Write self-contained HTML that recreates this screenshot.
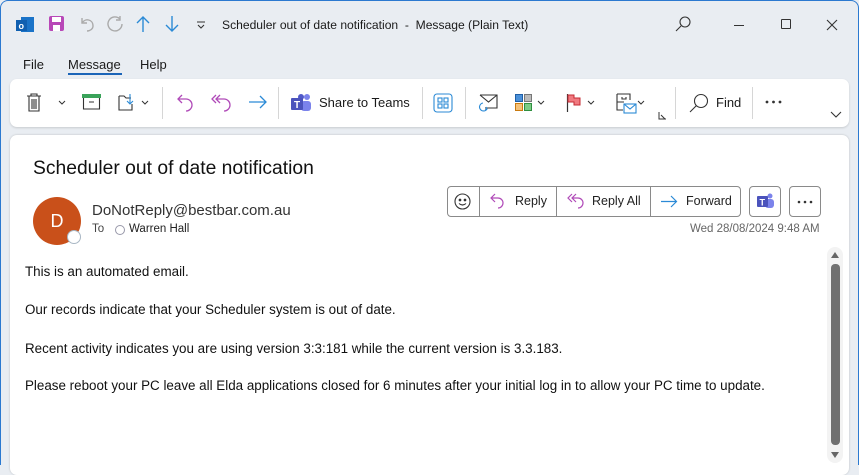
<!DOCTYPE html>
<html><head><meta charset="utf-8"><style>
*{box-sizing:border-box;margin:0;padding:0}
body{width:859px;height:465px;overflow:hidden;background:#e9edf2;font-family:"Liberation Sans",sans-serif;color:#1a1a1a;position:relative}
.frame{position:absolute;inset:0;border:1px solid #2b79d0;border-bottom:none;border-radius:8px 8px 0 0}
.a{position:absolute;white-space:nowrap}
svg{position:absolute}
.rib{position:absolute;left:10px;top:79px;width:839px;height:48px;background:#fff;border-radius:7px;box-shadow:0 1px 2px rgba(0,0,0,.15)}
.sep{position:absolute;top:8px;width:1px;height:32px;background:#d6d6d6}
.card{position:absolute;left:10px;top:135px;width:839px;height:340px;background:#fff;border-radius:7px;box-shadow:0 0 2px rgba(0,0,0,.2)}
.btn{position:absolute;top:186px;height:31px;border:1px solid #8a8a8a;border-radius:4px;background:#fff}
.bt{font-size:12.5px;color:#222}
.p{font-size:13.4px;color:#111}
</style></head><body>
<div class="frame"></div>
<svg style="left:15px;top:16px" width="20" height="18"><rect x="6" y="1" width="13" height="15" fill="#1a73c8"/><rect x="1" y="4" width="11" height="11" fill="#0f5fb0"/><text x="3.5" y="13" font-size="9" fill="#fff" font-family="Liberation Sans" font-weight="bold">o</text></svg>
<svg style="left:48px;top:15px" width="18" height="18"><rect x="1" y="1" width="15" height="15" rx="2" fill="#b848b8"/><rect x="4" y="2" width="9" height="5" fill="#fff"/><rect x="5" y="10" width="7" height="6" fill="#fff"/></svg>
<svg style="left:78px;top:15px" width="18" height="18" fill="none" stroke="#aaa" stroke-width="1.4"><path d="M4 3v5h5"/><path d="M4 8c3-5 11-4 11 3 0 3-3 5-6 5"/></svg>
<svg style="left:106px;top:15px" width="18" height="18" fill="none" stroke="#aaa" stroke-width="1.4"><path d="M14 4a7 7 0 1 0 2 5"/><path d="M14 1v4h-4"/></svg>
<svg style="left:135px;top:15px" width="16" height="18" fill="none" stroke="#2b8ad6" stroke-width="1.4"><path d="M8 17V2M2 8l6-6 6 6"/></svg>
<svg style="left:164px;top:15px" width="16" height="18" fill="none" stroke="#2b8ad6" stroke-width="1.4"><path d="M8 1v15M2 10l6 6 6-6"/></svg>
<svg style="left:196px;top:21px" width="10" height="8" fill="none" stroke="#333" stroke-width="1.1"><path d="M1 1h8M2 4l3 3 3-3"/></svg>
<div class="a" style="left:222px;top:18px;font-size:12.1px">Scheduler out of date notification&nbsp; - &nbsp;Message (Plain Text)</div>
<svg style="left:675px;top:16px" width="16" height="16" fill="none" stroke="#333" stroke-width="1.1"><circle cx="10" cy="6" r="5"/><path d="M6 10l-5 5"/></svg>
<div class="a" style="left:734px;top:25px;width:10px;height:1px;background:#333"></div>
<div class="a" style="left:781px;top:19px;width:10px;height:10px;border:1px solid #333;border-radius:1px"></div>
<svg style="left:826px;top:19px" width="12" height="12" stroke="#333" stroke-width="1.1"><path d="M1 1l10 10M11 1L1 11"/></svg>
<div class="a" style="left:23px;top:57px;font-size:13px">File</div>
<div class="a" style="left:68px;top:57px;font-size:13px">Message</div>
<div class="a" style="left:68px;top:73px;width:54px;height:2px;background:#1a64b8"></div>
<div class="a" style="left:140px;top:57px;font-size:13px">Help</div>
<div class="rib">
<svg style="left:16px;top:14px" width="16" height="20" fill="none" stroke="#333" stroke-width="1.1"><path d="M1 3h14M5 3V1h6v2M3 3v15h10V3M6 6v10M8 6v10M10 6v10"/></svg>
<svg style="left:48px;top:21px" width="8" height="6" fill="none" stroke="#333"><path d="M1 1l3 3 3-3"/></svg>
<svg style="left:72px;top:15px" width="19" height="17" fill="none" stroke="#333" stroke-width="1.1"><rect x="0" y="0" width="19" height="4" fill="#3aa35a" stroke="none"/><path d="M1.5 4v11h16V4M7 8h5"/></svg>
<svg style="left:108px;top:14px" width="22" height="19" fill="none" stroke="#333" stroke-width="1.1"><path d="M1 3h5l2 2h5M1 3v14h13v-6"/><path d="M12 1v10M9 8l3 3 3-3" stroke="#2b8ad6"/></svg>
<svg style="left:131px;top:21px" width="8" height="6" fill="none" stroke="#333"><path d="M1 1l3 3 3-3"/></svg>
<div class="sep" style="left:152px"></div>
<svg style="left:166px;top:14px" width="20" height="20" fill="none" stroke="#b04ab8" stroke-width="1.3"><path d="M6 2L2 6l4 4"/><path d="M2 6h8a6 6 0 0 1 0 12"/></svg>
<svg style="left:200px;top:14px" width="22" height="20" fill="none" stroke="#b04ab8" stroke-width="1.3"><path d="M6 2L2 6l4 4M10 2L6 6l4 4"/><path d="M6 6h8a6 6 0 0 1 0 12"/></svg>
<svg style="left:238px;top:15px" width="20" height="16" fill="none" stroke="#2b8ad6" stroke-width="1.3"><path d="M1 8h17M12 2l6 6-6 6"/></svg>
<div class="sep" style="left:268px"></div>
<svg style="left:280px;top:14px" width="22" height="20"><circle cx="17" cy="4" r="3" fill="#7b83eb"/><rect x="11" y="8" width="10" height="10" rx="3" fill="#7b83eb"/><circle cx="11" cy="4" r="3" fill="#5059c9"/><rect x="1" y="5" width="12" height="12" rx="1" fill="#4b53bc"/><text x="4" y="15" font-size="10" fill="#fff" font-weight="bold" font-family="Liberation Sans">T</text></svg>
<div class="a" style="left:309px;top:16px;font-size:13px">Share to Teams</div>
<div class="sep" style="left:412px"></div>
<svg style="left:423px;top:14px" width="20" height="20" fill="none" stroke="#2b8ad6" stroke-width="1.1"><rect x="1" y="1" width="18" height="18" rx="3"/><rect x="5" y="5" width="4" height="4"/><rect x="11" y="5" width="4" height="4"/><rect x="5" y="11" width="4" height="4"/><rect x="11" y="11" width="4" height="4"/></svg>
<div class="sep" style="left:455px"></div>
<svg style="left:467px;top:15px" width="22" height="20" fill="none" stroke-width="1.1"><path d="M3 1h17v13H8M3 1l8.5 7L20 1" stroke="#333"/><path d="M6 9a4 4 0 1 0 4 6M8 16l2-1-1-2" stroke="#2b8ad6"/></svg>
<svg style="left:505px;top:15px" width="18" height="18"><rect x="0.5" y="0.5" width="7" height="7" fill="#4a90d9" stroke="#1f5fa6"/><rect x="9.5" y="0.5" width="7" height="7" fill="#bbb" stroke="#777"/><rect x="0.5" y="9.5" width="7" height="7" fill="#f5c27a" stroke="#c97a10"/><rect x="9.5" y="9.5" width="7" height="7" fill="#7ccc86" stroke="#2f8f3f"/></svg>
<svg style="left:527px;top:21px" width="8" height="6" fill="none" stroke="#333"><path d="M1 1l3 3 3-3"/></svg>
<svg style="left:556px;top:14px" width="16" height="20"><path d="M1.5 1v18" stroke="#333" stroke-width="1.2"/><path d="M2 2h6v3h6v7H8V9H2z" fill="#f07a80" stroke="#c42b33"/></svg>
<svg style="left:577px;top:21px" width="8" height="6" fill="none" stroke="#333"><path d="M1 1l3 3 3-3"/></svg>
<svg style="left:606px;top:14px" width="24" height="22" fill="none" stroke-width="1.1"><path d="M1 1h13v6M1 1v16h6M6 4v2h4V4M1 9h7" stroke="#333"/><rect x="8" y="11" width="12" height="9" stroke="#2b8ad6"/><path d="M8 11l6 5 6-5" stroke="#2b8ad6"/></svg>
<svg style="left:627px;top:21px" width="8" height="6" fill="none" stroke="#333"><path d="M1 1l3 3 3-3"/></svg>
<svg style="left:648px;top:33px" width="8" height="8" fill="none" stroke="#333"><path d="M1 0v7h7M3 3l4 4"/></svg>
<div class="sep" style="left:665px"></div>
<svg style="left:679px;top:14px" width="20" height="20" fill="none" stroke="#333" stroke-width="1.1"><circle cx="12" cy="8" r="6.5"/><path d="M7.5 12.5L1 19"/></svg>
<div class="a" style="left:706px;top:16px;font-size:13px">Find</div>
<div class="sep" style="left:742px"></div>
<svg style="left:755px;top:21px" width="18" height="4" fill="#333"><circle cx="2" cy="2" r="1.4"/><circle cx="8.5" cy="2" r="1.4"/><circle cx="15" cy="2" r="1.4"/></svg>
<svg style="left:820px;top:32px" width="12" height="8" fill="none" stroke="#333" stroke-width="1.1"><path d="M1 1l5 5 5-5"/></svg>
</div>
<div class="card"></div>
<div class="a" style="left:33px;top:158px;font-size:19.3px;color:#111">Scheduler out of date notification</div>
<div class="a" style="left:33px;top:197px;width:48px;height:48px;border-radius:50%;background:#c9501a;color:#fff;font-size:18px;text-align:center;line-height:48px">D</div>
<div class="a" style="left:67px;top:230px;width:14px;height:14px;border-radius:50%;background:#fff;border:1.5px solid #a9b7c4"></div>
<div class="a" style="left:92px;top:202px;font-size:15px;color:#333">DoNotReply@bestbar.com.au</div>
<div class="a" style="left:92px;top:223px;font-size:11.5px;color:#444">To</div>
<div class="a" style="left:115px;top:225px;width:10px;height:10px;border-radius:50%;border:1px solid #99a"></div>
<div class="a" style="left:129px;top:223px;font-size:11.5px;color:#222">Warren Hall</div>
<div class="btn" style="left:447px;width:294px"></div>
<div class="a" style="left:479px;top:187px;width:1px;height:29px;background:#8a8a8a"></div>
<div class="a" style="left:556px;top:187px;width:1px;height:29px;background:#8a8a8a"></div>
<div class="a" style="left:650px;top:187px;width:1px;height:29px;background:#8a8a8a"></div>
<svg style="left:454px;top:193px" width="17" height="17" fill="none" stroke="#333" stroke-width="1.1"><circle cx="8.5" cy="8.5" r="7.5"/><circle cx="6" cy="7" r=".8" fill="#333"/><circle cx="11" cy="7" r=".8" fill="#333"/><path d="M5 10.5q3.5 3 7 0"/></svg>
<svg style="left:490px;top:193px" width="16" height="16" fill="none" stroke="#b04ab8" stroke-width="1.2"><path d="M5 1L1 5l4 4M1 5h7a5 5 0 0 1 0 10"/></svg>
<div class="a bt" style="left:515px;top:194px">Reply</div>
<svg style="left:567px;top:193px" width="18" height="16" fill="none" stroke="#b04ab8" stroke-width="1.2"><path d="M5 1L1 5l4 4M9 1L5 5l4 4M5 5h6a5 5 0 0 1 0 10"/></svg>
<div class="a bt" style="left:592px;top:194px">Reply All</div>
<svg style="left:661px;top:195px" width="17" height="13" fill="none" stroke="#2b8ad6" stroke-width="1.2"><path d="M0 6.5h15M10 1l5.5 5.5L10 12"/></svg>
<div class="a bt" style="left:686px;top:194px">Forward</div>
<div class="btn" style="left:749px;width:32px"></div>
<svg style="left:755px;top:192px" width="22" height="20"><circle cx="15" cy="4" r="2.5" fill="#7b83eb"/><rect x="10" y="7" width="9" height="9" rx="3" fill="#7b83eb"/><rect x="2" y="4" width="11" height="11" rx="1" fill="#4b53bc"/><text x="4.5" y="13.5" font-size="9" fill="#fff" font-weight="bold" font-family="Liberation Sans">T</text></svg>
<div class="btn" style="left:789px;width:32px"></div>
<svg style="left:797px;top:200px" width="16" height="4" fill="#333"><circle cx="2" cy="2" r="1.3"/><circle cx="8" cy="2" r="1.3"/><circle cx="14" cy="2" r="1.3"/></svg>
<div class="a" style="left:690px;top:223px;font-size:11.5px;color:#666">Wed 28/08/2024 9:48 AM</div>
<div class="a p" style="left:25px;top:264px">This is an automated email.</div>
<div class="a p" style="left:25px;top:302px">Our records indicate that your Scheduler system is out of date.</div>
<div class="a p" style="left:25px;top:341px">Recent activity indicates you are using version 3:3:181 while the current version is 3.3.183.</div>
<div class="a p" style="left:25px;top:378px">Please reboot your PC leave all Elda applications closed for 6 minutes after your initial log in to allow your PC time to update.</div>
<div class="a" style="left:827px;top:247px;width:16px;height:216px;background:#f3f3f3;border-radius:8px"></div>
<svg style="left:831px;top:252px" width="8" height="6"><path d="M0 6L4 0 8 6z" fill="#666"/></svg>
<div class="a" style="left:831px;top:264px;width:9px;height:181px;background:#707070;border-radius:4px"></div>
<svg style="left:831px;top:452px" width="8" height="6"><path d="M0 0L4 6 8 0z" fill="#666"/></svg>
</body></html>
